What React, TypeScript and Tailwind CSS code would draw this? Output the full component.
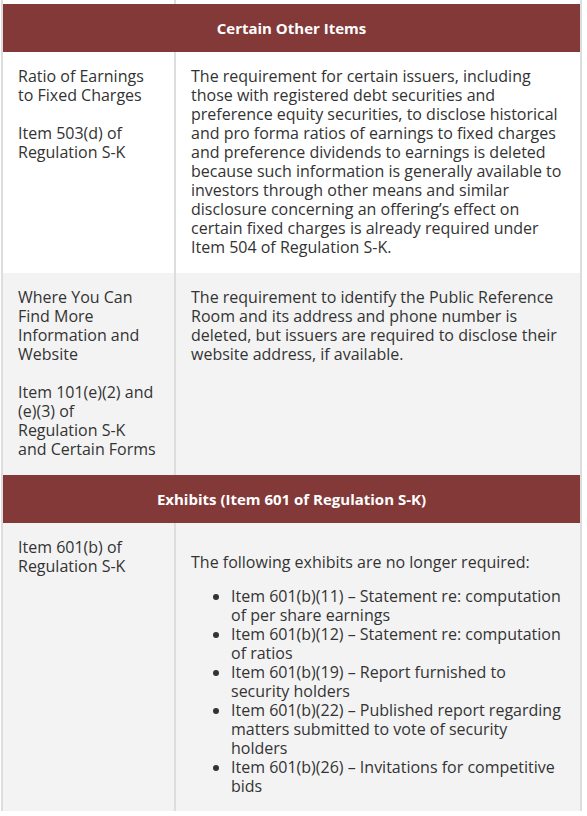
import React from "react";

type Row = { left: string[][]; right: string[]; bg: string };

const rows1: Row[] = [
  {
    bg: "bg-white",
    left: [
      ["Ratio of Earnings", "to Fixed Charges"],
      ["Item 503(d) of", "Regulation S-K"],
    ],
    right: [
      "The requirement for certain issuers, including",
      "those with registered debt securities and",
      "preference equity securities, to disclose historical",
      "and pro forma ratios of earnings to fixed charges",
      "and preference dividends to earnings is deleted",
      "because such information is generally available to",
      "investors through other means and similar",
      "disclosure concerning an offering’s effect on",
      "certain fixed charges is already required under",
      "Item 504 of Regulation S-K.",
    ],
  },
  {
    bg: "bg-[#f3f3f3]",
    left: [
      ["Where You Can", "Find More", "Information and", "Website"],
      ["Item 101(e)(2) and", "(e)(3) of", "Regulation S-K", "and Certain Forms"],
    ],
    right: [
      "The requirement to identify the Public Reference",
      "Room and its address and phone number is",
      "deleted, but issuers are required to disclose their",
      "website address, if available.",
    ],
  },
];

const exhibits = [
  ["Item 601(b)(11) – Statement re: computation", "of per share earnings"],
  ["Item 601(b)(12) – Statement re: computation", "of ratios"],
  ["Item 601(b)(19) – Report furnished to", "security holders"],
  ["Item 601(b)(22) – Published report regarding", "matters submitted to vote of security", "holders"],
  ["Item 601(b)(26) – Invitations for competitive", "bids"],
];

function Lines({ lines }: { lines: string[] }) {
  return (
    <>
      {lines.map((l, i) => (
        <span key={i} className="block whitespace-nowrap">
          {l}
        </span>
      ))}
    </>
  );
}

function HeaderRow({ title }: { title: string }) {
  return (
    <div className="h-[48px] bg-[#833938] text-white font-bold flex items-center justify-center text-[15px]">
      {title}
    </div>
  );
}

function BodyRow({ row }: { row: Row }) {
  return (
    <div className={`flex ${row.bg}`}>
      <div className="w-[173px] shrink-0 border-r-2 border-[#dddddd] px-[15px] pt-[15px] pb-[16px]">
        {row.left.map((p, i) => (
          <p key={i} className={i > 0 ? "mt-[19px]" : ""}>
            <Lines lines={p} />
          </p>
        ))}
      </div>
      <div className="flex-1 px-[15px] pt-[15px] pb-[16px]">
        <p>
          <Lines lines={row.right} />
        </p>
      </div>
    </div>
  );
}

export default function App() {
  return (
    <div
      className="min-h-screen bg-white text-[#333333] text-[16px] leading-[19px]"
      style={{ fontFamily: '"Open Sans", "Liberation Sans", sans-serif' }}
    >
      <div className="ml-px w-[581px] border-x-2 border-[#dddddd]">
        {/* tail of previous row */}
        <div className="flex h-[4px] bg-white">
          <div className="w-[173px] border-r-2 border-[#dddddd]" />
        </div>

        <HeaderRow title="Certain Other Items" />
        {rows1.map((r, i) => (
          <BodyRow key={i} row={r} />
        ))}

        <HeaderRow title="Exhibits (Item 601 of Regulation S-K)" />
        <div className="flex bg-[#f3f3f3]">
          <div className="w-[173px] shrink-0 border-r-2 border-[#dddddd] px-[15px] pt-[15px] pb-[16px]">
            <p>
              <Lines lines={["Item 601(b) of", "Regulation S-K"]} />
            </p>
          </div>
          <div className="flex-1 px-[15px] pt-[15px] pb-[15px]">
            <p className="my-[15px]">The following exhibits are no longer required:</p>
            <ul className="list-disc pl-[40px]">
              {exhibits.map((e) => (
                <li key={e[0]}>
                  <Lines lines={e} />
                </li>
              ))}
            </ul>
          </div>
        </div>
      </div>
    </div>
  );
}
